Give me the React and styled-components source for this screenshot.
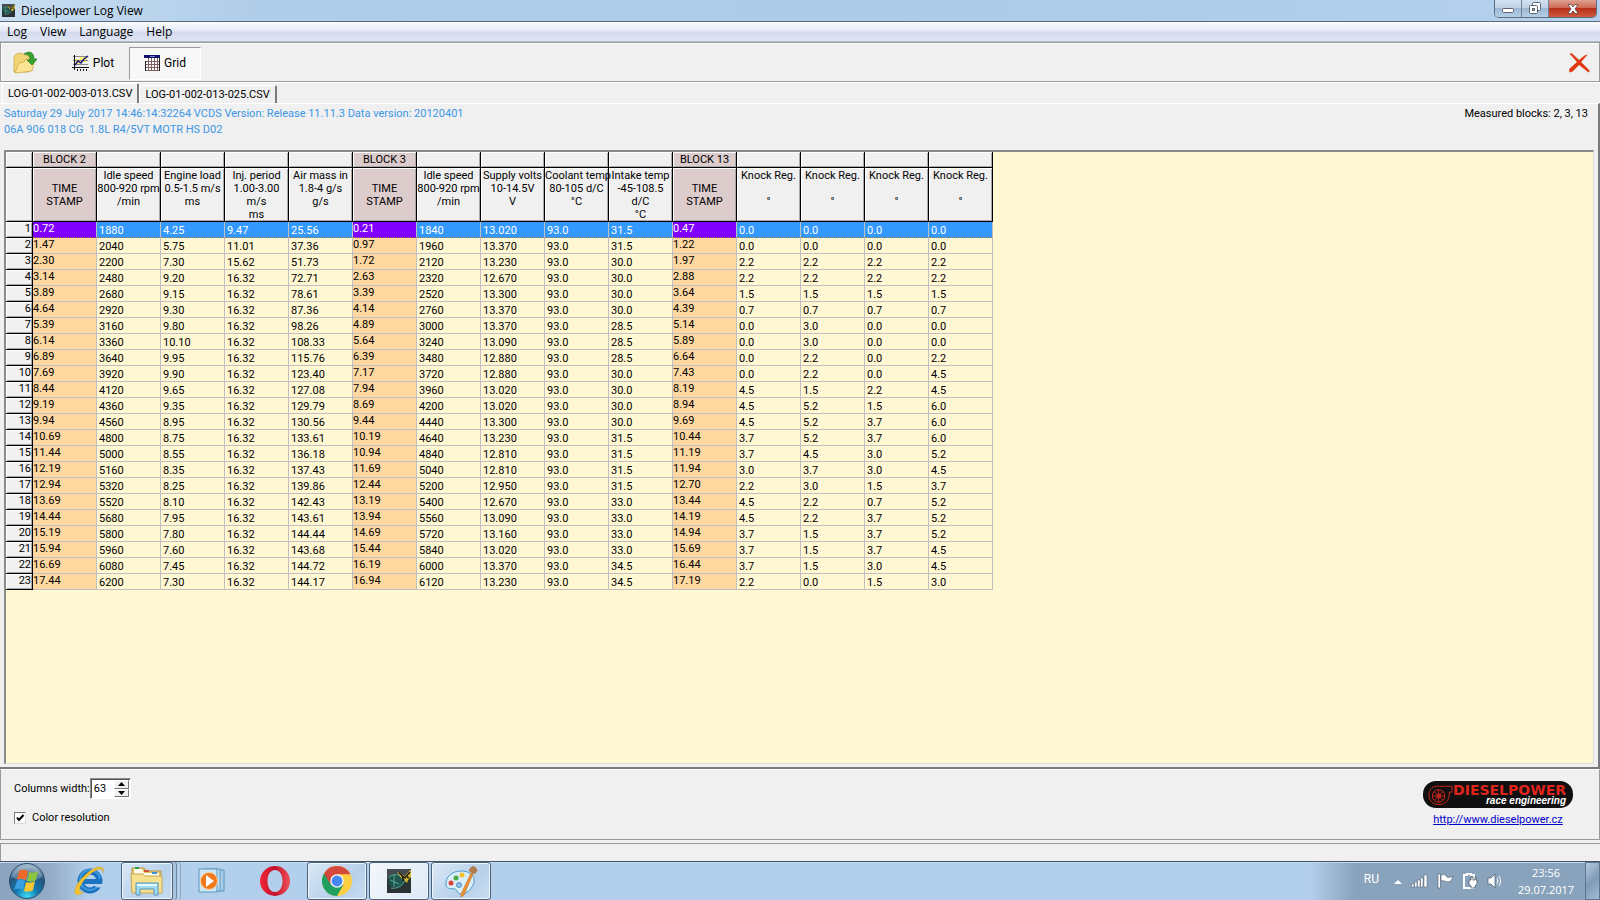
import React, { useState } from "react"
import styled, { createGlobalStyle, css } from "styled-components"

const GlobalStyle = createGlobalStyle`
  * {
    box-sizing: border-box;
  }
  body {
    margin: 0;
    background: #f0f0f0;
  }
  button,
  input {
    font: inherit;
    color: inherit;
    padding: 0;
    margin: 0;
  }
`

const Window = styled.div`
  display: flex;
  flex-direction: column;
  min-height: 100vh;
  background: #f0f0f0;
  color: #000;
  font: 11px/16px Roboto, "Liberation Sans", Arial, sans-serif;
`

const TitleBar = styled.header`
  display: flex;
  align-items: center;
  gap: 6px;
  height: 22px;
  padding-left: 2px;
  background: linear-gradient(90deg, #c9dff2, #b0cde9 16%, #acccea 60%, #b4d0ec);
  border-bottom: 1px solid #5b6b7c;
  font: 12px/18px "Open Sans", "Noto Sans", sans-serif;
`

const Title = styled.h1`
  flex: 1;
  margin: 0;
  font-size: 12px;
  font-weight: 400;
`

const WindowButtons = styled.div`
  display: flex;
  align-self: flex-start;
  height: 18px;
  margin-right: 3px;
  border: 1px solid #5a6d82;
  border-top: 0;
  border-radius: 0 0 5px 5px;
  overflow: hidden;
`

const WindowButton = styled.button`
  display: flex;
  align-items: center;
  justify-content: center;
  width: ${(props) => (props.$close ? 47 : 27)}px;
  border: 0;
  border-right: ${(props) => (props.$close ? "0" : "1px solid #6d8298")};
  background: ${(props) =>
    props.$close
      ? "linear-gradient(#dfa292, #cf6a55 45%, #b8301a 50%, #cf5a3c)"
      : "linear-gradient(#d3e2f2, #bfd2e6 45%, #9fb9d4 50%, #b5cfe8)"};
`

const MenuBar = styled.nav`
  display: flex;
  height: 20px;
  padding-left: 7px;
  gap: 13px;
  background: linear-gradient(#fbfcfe, #e4e9f5 45%, #d4dbed 55%, #dfe4f3);
  border-bottom: 1px solid #b5bccb;
  font: 12px/20px "Open Sans", "Noto Sans", sans-serif;
`

const MenuItem = styled.button`
  border: 0;
  background: none;
`

const ToolBar = styled.div`
  display: flex;
  align-items: center;
  height: 40px;
  padding: 2px 8px 0 11px;
  border: 1px solid #9a9a9a;
  box-shadow: inset 1px 1px #fff, 0 1px #fff;
  font-size: 12px;
`

const ToolGroup = styled.div`
  display: flex;
  flex: 1;
  margin-left: 18px;
`

const ToolButton = styled.button`
  display: flex;
  align-items: center;
  justify-content: center;
  gap: 4px;
  width: ${(props) => props.$width}px;
  height: 33px;
  border: 1px solid transparent;
  background: none;
  ${(props) =>
    props.$pressed &&
    css`
      border-color: #9a9a9a #fff #fff #9a9a9a;
      background: #f8f8f8;
    `}
`

const Spacer = styled.div`
  flex: 1;
`

const Tabs = styled.div`
  display: flex;
  align-items: flex-end;
  height: 21px;
  padding-left: 2px;
`

const Tab = styled.button`
  height: ${(props) => (props.$active ? 20 : 18)}px;
  padding: 0 5px;
  border: 0;
  border-top: 1px solid #fff;
  border-left: 1px solid #fff;
  border-right: 2px solid #7a7a7a;
  border-radius: 2px 2px 0 0;
  background: #f0f0f0;
`

const Page = styled.main`
  flex: 1;
  display: flex;
  flex-direction: column;
  padding: 2px 4px 3px;
  border-top: 1px solid #fff;
  border-right: 2px solid #7a7a7a;
  border-bottom: 2px solid #7a7a7a;
`

const Info = styled.div`
  display: flex;
  justify-content: space-between;
  padding: 0 6px 0 0;
  height: 44px;
`

const LogInfo = styled.div`
  color: #3c96e6;
  white-space: pre;
`

const GridBox = styled.div`
  flex: 1;
  border: 2px solid #8a8a8a;
  border-right: 1px solid #dcdcdc;
  border-bottom: 1px solid #dcdcdc;
  background: #fff8d2;
`

const Table = styled.table`
  width: 987px;
  table-layout: fixed;
  border-collapse: separate;
  border-spacing: 0;
`

const HeadCell = styled.th`
  height: ${(props) => props.$height}px;
  padding: ${(props) => (props.$center ? "0" : "1px 0 0")};
  border-right: 1px solid #000;
  border-bottom: 1px solid #000;
  background: ${(props) => (props.$stamp ? "#dccccc" : "#f0f0f0")};
  box-shadow: inset 1px 1px #fff, inset -1px -1px #a8a8a8;
  font-weight: 400;
  line-height: ${(props) => (props.$center ? 13 : 12)}px;
  line-height: 13px;
  text-align: center;
  vertical-align: ${(props) => (props.$center ? "middle" : "top")};
  white-space: pre;
`

const RowNumber = styled.th`
  height: 16px;
  padding: 0 1px 0 0;
  border-right: 1px solid #000;
  border-bottom: 1px solid #000;
  background: #f0f0f0;
  box-shadow: inset 1px 1px #fff, inset -1px -1px #a8a8a8;
  font-weight: 400;
  line-height: 13px;
  text-align: right;
  vertical-align: top;
`

const Cell = styled.td`
  height: 16px;
  padding: ${(props) => (props.$stamp ? "0" : "2px 0 0 2px")};
  border-right: 1px solid #c0c0c0;
  border-bottom: 1px solid #c0c0c0;
  background: ${(props) => (props.$stamp ? "#ffd8a0" : "#fff8d2")};
  line-height: 13px;
  vertical-align: top;
  ${(props) =>
    props.$selected &&
    css`
      color: #fff;
      background: ${props.$stamp ? "#8000ff" : "#3399ff"};
      border-bottom: 1px dotted #b07a50;
    `}
`

const Options = styled.section`
  display: flex;
  justify-content: space-between;
  height: 71px;
  padding: 8px 26px 0 13px;
  border: 1px solid #9a9a9a;
  border-top-color: #fff;
`

const Controls = styled.div`
  display: flex;
  flex-direction: column;
  gap: 11px;
`

const Field = styled.label`
  display: flex;
  align-items: center;
  height: 21px;
`

const SpinBox = styled.span`
  display: flex;
  width: 41px;
  height: 21px;
  padding: 1px;
  border: 1px solid;
  border-color: #8a8a8a #fff #fff #8a8a8a;
  background: #fff;
  box-shadow: inset 1px 1px #555;
`

const SpinInput = styled.input`
  flex: 1;
  min-width: 0;
  padding-left: 2px;
  border: 0;
  outline: 0;
  background: none;
`

const SpinButtons = styled.span`
  display: flex;
  flex-direction: column;
  width: 15px;
`

const SpinButton = styled.button`
  display: flex;
  flex: 1;
  align-items: center;
  justify-content: center;
  border: 1px solid;
  border-color: #fff #777 #777 #fff;
  background: #f0f0f0;
`

const CheckField = styled.label`
  display: flex;
  align-items: center;
  gap: 6px;
`

const CheckBox = styled.input`
  appearance: none;
  width: 12px;
  height: 12px;
  border: 1px solid;
  border-color: #777 #ddd #ddd #777;
  background: #fff;
  &:checked {
    background: #fff
      url("data:image/svg+xml,%3Csvg xmlns='http://www.w3.org/2000/svg' viewBox='0 0 10 10'%3E%3Cpath d='M2 4.5l2 2.5 4.500-5' fill='none' stroke='%23000' stroke-width='2'/%3E%3C/svg%3E");
  }
`

const Brand = styled.div`
  display: flex;
  flex-direction: column;
  align-items: center;
  gap: 4px;
  padding-top: 3px;
`

const Logo = styled.div`
  display: flex;
  align-items: center;
  width: 150px;
  height: 27px;
  padding: 0 7px 0 5px;
  border-radius: 13px;
  background: #101010;
`

const LogoText = styled.div`
  display: flex;
  flex: 1;
  flex-direction: column;
  align-items: flex-end;
  color: #fff;
  font: italic bold 10px/10px "Liberation Sans", sans-serif;
`

const LogoName = styled.strong`
  color: #e0241c;
  font: bold 14px/12px "DejaVu Sans", sans-serif;
`

const Link = styled.a`
  color: #0000c8;
`

const StatusBar = styled.footer`
  height: 18px;
  margin-top: 3px;
  border: 1px solid #9a9a9a;
  border-width: 1px 0 0 1px;
`

const TaskBar = styled.div`
  display: flex;
  gap: 2px;
  height: 39px;
  border-top: 1px solid #44566a;
  background: linear-gradient(
    90deg,
    #8ba3bd 0,
    #94acc6 50px,
    #b2cfec 90px,
    #b2cfec calc(100% - 290px),
    #8aa3bc calc(100% - 245px)
  );
  box-shadow: inset 0 1px #c4d9ee;
`

const Task = styled.button`
  display: flex;
  align-items: center;
  justify-content: center;
  width: ${(props) => (props.$start ? 57 : 60)}px;
  padding-right: ${(props) => (props.$start ? 3 : 0)}px;
  border: 1px solid transparent;
  border-radius: 3px;
  background: none;
  ${(props) =>
    props.$open &&
    css`
      border-color: #4c627a;
      background: ${props.$active
        ? "linear-gradient(135deg, #f4f8fc, #dce9f5)"
        : "linear-gradient(135deg, #dbe8f5, #b7d1eb 60%, #c8dcf0)"};
      box-shadow: inset 0 0 0 1px #eef5fc;
    `}
  ${(props) =>
    props.$stacked &&
    css`
      width: 52px;
      margin-right: 8px;
      box-shadow: inset 0 0 0 1px #eef5fc, 3px 0 #a9c4df, 4px 0 #6c859f,
        7px 0 #b2cfec, 8px 0 #8ea9c4;
    `}
`

const Tray = styled.div`
  display: flex;
  align-items: center;
  color: #fff;
`

const InputLanguage = styled.span`
  padding-bottom: 4px;
  font-size: 12px;
`

const TrayIcons = styled.div`
  display: flex;
  align-items: center;
  gap: 9px;
  margin: 0 15px;
`

const Clock = styled.time`
  width: 56px;
  margin-right: 11px;
  font: 11px/17px "Open Sans", "Noto Sans", sans-serif;
  text-align: center;
  white-space: nowrap;
`

const ShowDesktop = styled.button`
  align-self: stretch;
  width: 15px;
  border: 1px solid #5b7591;
  background: linear-gradient(135deg, #b8cbdf, #7f9bb8 50%, #a4bcd4);
`

const AppIcon = ({ size }) => (
  <svg width={size} height={size} viewBox="0 0 24 24">
    <rect width="24" height="24" fill="#2b3234" />
    <path d="M0 0h24v5L0 10z" fill="#454b4e" />
    <path d="M1 8c6-5 12-3 16 1v6c-4 5-12 4-15 1z" fill="#20544f" />
    <path d="M2 8c5-4 12-3 16 4M4 19c5 1 11-1 14-8M3 11l9 4M7 6v12" stroke="#5aa596" fill="none" />
    <path d="M10 3l8 4 5-6 1 1v6l-3 3-1 3-3-3-3-2z" fill="#d9b933" />
    <path d="M12 4l6 5 5-6M15 7l2 5M20 8l2 1" stroke="#1d1d10" strokeWidth="1.500" fill="none" />
  </svg>
)

const OpenIcon = () => (
  <svg width="25" height="24" viewBox="0 0 25 24">
    <path d="M1 21V6l2-3 6-1 2 2 8 0v6l-3 11z" fill="#f2d676" stroke="#c9a444" strokeWidth=".7" />
    <path d="M2 22l4-10 5-1 2-3 9 1-3 11z" fill="#fbe593" stroke="#d0ac4e" strokeWidth=".8" />
    <path d="M11 3c6-4 10-1 10 5h3l-5 6-5-5h3c0-4-2-6-6-6z" fill="#37a62f" stroke="#18731c" strokeWidth=".7" />
  </svg>
)

const PlotIcon = () => (
  <svg width="17" height="16" viewBox="0 0 17 16" fill="none">
    <path d="M2 4h6v5H2zM8 1h7v6H8z" fill="#fff27a" />
    <path d="M1 1.500h15M1 5.500h15M1 9.500h15" stroke="#8a8a8a" />
    <path d="M2.500 0v15M0 12.500h17M5.500 14v2M8.500 14v2M11.500 14v2M14.500 14v2" stroke="#111" />
    <path d="M3 10l3-4 3 2 3-4 4-3" stroke="#16167c" strokeWidth="1.500" />
  </svg>
)

const GridIcon = () => (
  <svg width="16" height="16" viewBox="0 0 16 16">
    <path d="M1 3h14v13H1z" fill="#fff" />
    <path d="M4.500 3v13M7.500 3v13M10.500 3v13M13.500 3v13M1 6.500h15M1 9.500h15M1 12.500h15M1 15.500h15" stroke="#806060" />
    <path d="M0 0h16v3H0z" fill="#10106e" />
    <path d="M15.500 3v13M1.500 6v10" stroke="#222" />
    <path d="M6 1.500h5" stroke="#6a80d0" />
  </svg>
)

const CloseLogIcon = () => (
  <svg width="23" height="22" viewBox="0 0 23 22">
    <path d="M1 1l2-.5L11 8l6-5 3-1-7 8 9 9v2l-2-1-9-7-7 7-3 1-1-3 9-8z" fill="#df3510" stroke="#df3510" strokeWidth=".5" />
  </svg>
)

const MinimizeIcon = () => (
  <svg width="12" height="16" viewBox="0 0 12 16">
    <rect x=".5" y="7.500" width="11" height="4" rx="1" fill="#fff" stroke="#5b6470" />
  </svg>
)

const RestoreIcon = () => (
  <svg width="12" height="13" viewBox="0 0 12 13">
    <rect x="3.500" y=".5" width="8" height="8" rx="1" fill="#fff" stroke="#5b6470" />
    <rect x=".5" y="3.500" width="8" height="8" rx="1" fill="#fff" stroke="#5b6470" />
    <rect x="3.500" y="6.500" width="2" height="2" fill="#9fb9d4" stroke="#5b6470" />
  </svg>
)

const CrossIcon = () => (
  <svg width="12" height="12" viewBox="0 0 12 12">
    <path d="M1 1.500h3L6 4l2-2.500h3L8 6l3.300 4.500H8L6 8l-2 2.500H.7L4 6z" fill="#fff" stroke="#5a3c42" strokeWidth=".8" />
  </svg>
)

const TurboIcon = () => (
  <svg width="26" height="22" viewBox="0 0 26 22" fill="none" stroke="#d0241c">
    <path d="M25 2v6h-3c1 8-4 13-11 13C5 21 1 17 1 11S5 1 12 2z" />
    <circle cx="11" cy="12" r="6.500" />
    <circle cx="11" cy="12" r="2" />
    <path d="M11 5.500v13M4.500 12h13M6.500 7.500l9 9M15.500 7.500l-9 9" />
  </svg>
)

const StartIcon = () => (
  <svg width="38" height="38" viewBox="0 0 38 38">
    <defs>
      <radialGradient id="orb" cx=".5" cy=".95" r=".95">
        <stop offset="0" stopColor="#3fdcf5" />
        <stop offset=".35" stopColor="#1378b0" />
        <stop offset=".7" stopColor="#27557d" />
        <stop offset="1" stopColor="#a9c4d8" />
      </radialGradient>
    </defs>
    <circle cx="19" cy="19" r="17.500" fill="url(#orb)" stroke="#294c6c" />
    <path d="M4 15C8 0 30 0 34 15c-9 5-21 5-30 0z" fill="#fff" opacity=".25" />
    <path d="M11 9c3-2 6-1 9 0l-2 9c-3-1-6-2-9 0z" fill="#ef6a28" />
    <path d="M21 10c3 1 6 1 9-1l-2 9c-3 2-6 2-9 1z" fill="#8cc63e" />
    <path d="M9 19c3-2 5-1 8 0l-2 9c-3-1-6-2-9 0z" fill="#38a0e2" />
    <path d="M18 20c3 1 6 1 9-1l-2 9c-3 2-6 2-9 1z" fill="#fcc832" />
  </svg>
)

const ExplorerIcon = () => (
  <svg width="32" height="32" viewBox="0 0 32 32">
    <circle cx="17" cy="16" r="9.500" fill="none" stroke="#1a70c0" strokeWidth="6" />
    <circle cx="17" cy="15" r="10" fill="none" stroke="#53b4ec" strokeWidth="2" opacity=".6" />
    <path d="M10 14h19v5H10z" fill="#1c73c2" />
    <path d="M20 19h10v4l-7-1z" fill="#b2cfec" />
    <path d="M30 8c1-4 0-6-3-6C18 2 4 16 2 25c-1 6 3 6 9 2-4 1-5-1-4-5C10 14 22 4 27 4c2 0 3 1 3 4z" fill="#f2c230" stroke="#c99b22" strokeWidth=".4" />
  </svg>
)

const FolderIcon = () => (
  <svg width="34" height="32" viewBox="0 0 34 32">
    <path d="M2 5V3h12l2 3h15v21H2z" fill="#e2c268" stroke="#b7974a" />
    <path d="M4 4h8l2 4h15v4H4z" fill="#fffbe8" />
    <path d="M5 2h4v2H5z" fill="#24a345" />
    <path d="M14 5h5v2h-5z" fill="#d64f3a" />
    <path d="M22 7h5v2h-5z" fill="#3c91d4" />
    <path d="M1 9h12l2 2h17v17H2z" fill="#f7e08e" stroke="#c8a850" />
    <path d="M6 18h22v12h-4v-6H10v6H6z" fill="#a2dcf2" stroke="#5096bd" />
    <path d="M7 20h20" stroke="#e6faff" strokeWidth="2" />
  </svg>
)

const PlayerIcon = () => (
  <svg width="30" height="28" viewBox="0 0 30 28">
    <path d="M10 3h16v21H10z" fill="#a8cfe9" stroke="#5b94bd" />
    <path d="M6 2h16v22H6z" fill="#bfe0f3" stroke="#5b94bd" />
    <path d="M1 2h18v23H1z" fill="#cfe7f5" stroke="#5b94bd" />
    <circle cx="11" cy="14" r="8.500" fill="#f07818" stroke="#fbd0a0" />
    <path d="M8 8l8 6-8 6z" fill="#fff" />
  </svg>
)

const OperaIcon = () => (
  <svg width="30" height="32" viewBox="0 0 30 32">
    <defs>
      <linearGradient id="opera" x2="1">
        <stop stopColor="#f32738" />
        <stop offset=".5" stopColor="#c3122a" />
        <stop offset="1" stopColor="#f0525c" />
      </linearGradient>
    </defs>
    <path fillRule="evenodd" d="M15 1a15 15 0 100 30 15 15 0 000-30zm0 4c5 0 7.500 5 7.500 11S20 27 15 27 7.500 22 7.500 16 10 5 15 5z" fill="url(#opera)" />
  </svg>
)

const ChromeIcon = () => (
  <svg width="30" height="30" viewBox="0 0 30 30">
    <circle cx="15" cy="15" r="15" fill="#ffcd41" />
    <path d="M15 15L2 7.500A15 15 0 0015 30l6.500-11.200z" fill="#1fa05e" />
    <path d="M15 8.200h13.300A15 15 0 002 7.500l6.800 11z" fill="#d5493c" />
    <circle cx="15" cy="15" r="6.800" fill="#f5f5f5" />
    <circle cx="15" cy="15" r="5.400" fill="#4687f4" />
  </svg>
)

const PaintIcon = () => (
  <svg width="34" height="32" viewBox="0 0 34 32">
    <path d="M2 20C1 12 8 6 17 6c8 0 14 4 13 11-1 6-7 12-13 12-4 0-3-4-6-5-4-1-8 1-9-4z" fill="#d9eef9" stroke="#4e9bc5" />
    <circle cx="7" cy="18" r="2.500" fill="#d9453a" />
    <circle cx="12" cy="13" r="2.500" fill="#49ab45" />
    <circle cx="18" cy="10" r="2.500" fill="#f5c22a" />
    <circle cx="15" cy="20" r="2.500" fill="#8cc4e8" stroke="#4e8fc0" />
    <path d="M27 8l2 1-9 21-3 2v-3z" fill="#ee9136" stroke="#b96918" strokeWidth=".5" />
    <path d="M25 6c0-3 3-5 5-5l3 3c1 2-1 5-4 5z" fill="#b07b4a" />
  </svg>
)

const SignalIcon = () => (
  <svg width="17" height="14" viewBox="0 0 17 14" fill="#fff" stroke="#46586b" strokeWidth=".5">
    <path d="M.5 10h2.500v3H.5zM3.500 8H6v5H3.500zM6.500 6H9v7H6.500zM9.500 4H12v9H9.500zM13 1h3v12h-3z" />
  </svg>
)

const FlagIcon = () => (
  <svg width="17" height="16" viewBox="0 0 17 16" fill="#fff" stroke="#46586b" strokeWidth=".6">
    <path d="M1 1h2.500v14H1z" />
    <path d="M4 2c3-1 5 0 6 2 2 1 4 0 6-1-1 3-2 6-5 6-2 0-4-2-7-1z" />
  </svg>
)

const PowerIcon = () => (
  <svg width="15" height="16" viewBox="0 0 15 16">
    <path d="M4 2V.8h4V2h3v13H1V2z" fill="none" stroke="#fff" strokeWidth="2" />
    <path d="M8 4v3H6v4l2 2v2h4v-2l2-2V7h-1V4h-1v3h-2V4z" fill="#fff" stroke="#46586b" strokeWidth=".8" />
  </svg>
)

const SoundIcon = () => (
  <svg width="16" height="16" viewBox="0 0 16 16" fill="none" stroke="#fff">
    <path d="M1 5h3l4-4v14l-4-4H1z" fill="#fff" stroke="#46586b" strokeWidth=".7" />
    <path d="M10 5c1 2 1 4 0 6M12 3c2 3 2 7 0 10" />
  </svg>
)

const Arrow = ({ up }) => (
  <svg width="7" height="4" viewBox="0 0 7 4">
    <path d={up ? "M0 4l3.500-4L7 4z" : "M0 0l3.500 4L7 0z"} />
  </svg>
)

const stamp = "TIME\nSTAMP"

const columns = [
  { block: "BLOCK 2", label: stamp },
  { label: "Idle speed\n800-920 rpm\n/min" },
  { label: "Engine load\n0.5-1.5 m/s\nms" },
  { label: "Inj. period\n1.00-3.00\nm/s\nms" },
  { label: "Air mass in\n1.8-4 g/s\ng/s" },
  { block: "BLOCK 3", label: stamp },
  { label: "Idle speed\n800-920 rpm\n/min" },
  { label: "Supply volts\n10-14.5V\nV" },
  { label: "Coolant temp\n80-105 d/C\n°C" },
  { label: "Intake temp\n-45-108.5\nd/C\n°C" },
  { block: "BLOCK 13", label: stamp },
  { label: "Knock Reg.\n\n°" },
  { label: "Knock Reg.\n\n°" },
  { label: "Knock Reg.\n\n°" },
  { label: "Knock Reg.\n\n°" },
]

const rows = `0.72 1880 4.25 9.47 25.56 0.21 1840 13.020 93.0 31.5 0.47 0.0 0.0 0.0 0.0
1.47 2040 5.75 11.01 37.36 0.97 1960 13.370 93.0 31.5 1.22 0.0 0.0 0.0 0.0
2.30 2200 7.30 15.62 51.73 1.72 2120 13.230 93.0 30.0 1.97 2.2 2.2 2.2 2.2
3.14 2480 9.20 16.32 72.71 2.63 2320 12.670 93.0 30.0 2.88 2.2 2.2 2.2 2.2
3.89 2680 9.15 16.32 78.61 3.39 2520 13.300 93.0 30.0 3.64 1.5 1.5 1.5 1.5
4.64 2920 9.30 16.32 87.36 4.14 2760 13.370 93.0 30.0 4.39 0.7 0.7 0.7 0.7
5.39 3160 9.80 16.32 98.26 4.89 3000 13.370 93.0 28.5 5.14 0.0 3.0 0.0 0.0
6.14 3360 10.10 16.32 108.33 5.64 3240 13.090 93.0 28.5 5.89 0.0 3.0 0.0 0.0
6.89 3640 9.95 16.32 115.76 6.39 3480 12.880 93.0 28.5 6.64 0.0 2.2 0.0 2.2
7.69 3920 9.90 16.32 123.40 7.17 3720 12.880 93.0 30.0 7.43 0.0 2.2 0.0 4.5
8.44 4120 9.65 16.32 127.08 7.94 3960 13.020 93.0 30.0 8.19 4.5 1.5 2.2 4.5
9.19 4360 9.35 16.32 129.79 8.69 4200 13.020 93.0 30.0 8.94 4.5 5.2 1.5 6.0
9.94 4560 8.95 16.32 130.56 9.44 4440 13.300 93.0 30.0 9.69 4.5 5.2 3.7 6.0
10.69 4800 8.75 16.32 133.61 10.19 4640 13.230 93.0 31.5 10.44 3.7 5.2 3.7 6.0
11.44 5000 8.55 16.32 136.18 10.94 4840 12.810 93.0 31.5 11.19 3.7 4.5 3.0 5.2
12.19 5160 8.35 16.32 137.43 11.69 5040 12.810 93.0 31.5 11.94 3.0 3.7 3.0 4.5
12.94 5320 8.25 16.32 139.86 12.44 5200 12.950 93.0 31.5 12.70 2.2 3.0 1.5 3.7
13.69 5520 8.10 16.32 142.43 13.19 5400 12.670 93.0 33.0 13.44 4.5 2.2 0.7 5.2
14.44 5680 7.95 16.32 143.61 13.94 5560 13.090 93.0 33.0 14.19 4.5 2.2 3.7 5.2
15.19 5800 7.80 16.32 144.44 14.69 5720 13.160 93.0 33.0 14.94 3.7 1.5 3.7 5.2
15.94 5960 7.60 16.32 143.68 15.44 5840 13.020 93.0 33.0 15.69 3.7 1.5 3.7 4.5
16.69 6080 7.45 16.32 144.72 16.19 6000 13.370 93.0 34.5 16.44 3.7 1.5 3.0 4.5
17.44 6200 7.30 16.32 144.17 16.94 6120 13.230 93.0 34.5 17.19 2.2 0.0 1.5 3.0`
  .split("\n")
  .map((line) => line.split(" "))

const LogGrid = ({ selected, onSelect }) => {
  return (
    <Table>
      <colgroup>
        <col width="27" />
        {columns.map((column, i) => (
          <col key={i} width="64" />
        ))}
      </colgroup>
      <thead>
        <tr>
          <HeadCell $height={16} />
          {columns.map((column, i) => (
            <HeadCell key={i} $height={16} $stamp={column.block} $center>
              {column.block}
            </HeadCell>
          ))}
        </tr>
        <tr>
          <HeadCell $height={52} />
          {columns.map((column, i) => (
            <HeadCell
              key={i}
              $height={52}
              $stamp={column.block}
              $center={column.block}
            >
              {column.label}
            </HeadCell>
          ))}
        </tr>
      </thead>
      <tbody>
        {rows.map((row, r) => (
          <tr key={r} onClick={() => onSelect(r)}>
            <RowNumber>{r + 1}</RowNumber>
            {row.map((value, i) => (
              <Cell key={i} $stamp={columns[i].block} $selected={r === selected}>
                {value}
              </Cell>
            ))}
          </tr>
        ))}
      </tbody>
    </Table>
  )
}

const App = () => {
  const [selected, setSelected] = useState(0)
  const [width, setWidth] = useState(63)

  return (
    <>
      <GlobalStyle />
      <Window>
        <TitleBar>
          <AppIcon size={13} />
          <Title>Dieselpower Log View</Title>
          <WindowButtons>
            <WindowButton aria-label="Minimize">
              <MinimizeIcon />
            </WindowButton>
            <WindowButton aria-label="Restore">
              <RestoreIcon />
            </WindowButton>
            <WindowButton aria-label="Close" $close>
              <CrossIcon />
            </WindowButton>
          </WindowButtons>
        </TitleBar>
        <MenuBar>
          <MenuItem>Log</MenuItem>
          <MenuItem>View</MenuItem>
          <MenuItem>Language</MenuItem>
          <MenuItem>Help</MenuItem>
        </MenuBar>
        <ToolBar>
          <ToolButton $width={27} aria-label="Open log">
            <OpenIcon />
          </ToolButton>
          <ToolGroup>
            <ToolButton $width={72}>
              <PlotIcon />
              Plot
            </ToolButton>
            <ToolButton $width={72} $pressed>
              <GridIcon />
              Grid
            </ToolButton>
          </ToolGroup>
          <ToolButton $width={23} aria-label="Close log">
            <CloseLogIcon />
          </ToolButton>
        </ToolBar>
        <Tabs>
          <Tab $active>LOG-01-002-003-013.CSV</Tab>
          <Tab>LOG-01-002-013-025.CSV</Tab>
        </Tabs>
        <Page>
          <Info>
            <LogInfo>
              {"Saturday 29 July 2017 14:46:14:32264 VCDS Version: Release 11.11.3 Data version: 20120401\n06A 906 018 CG  1.8L R4/5VT MOTR HS D02"}
            </LogInfo>
            <span>Measured blocks: 2, 3, 13</span>
          </Info>
          <GridBox>
            <LogGrid selected={selected} onSelect={setSelected} />
          </GridBox>
        </Page>
        <Options>
          <Controls>
            <Field htmlFor="width">
              Columns width:
              <SpinBox>
                <SpinInput
                  id="width"
                  value={width}
                  onChange={(e) => setWidth(Number(e.target.value) || 0)}
                />
                <SpinButtons>
                  <SpinButton aria-label="Wider" onClick={() => setWidth(width + 1)}>
                    <Arrow up />
                  </SpinButton>
                  <SpinButton aria-label="Narrower" onClick={() => setWidth(width - 1)}>
                    <Arrow />
                  </SpinButton>
                </SpinButtons>
              </SpinBox>
            </Field>
            <CheckField>
              <CheckBox type="checkbox" defaultChecked />
              Color resolution
            </CheckField>
          </Controls>
          <Brand>
            <Logo>
              <TurboIcon />
              <LogoText>
                <LogoName>DIESELPOWER</LogoName>
                race engineering
              </LogoText>
            </Logo>
            <Link href="http://www.dieselpower.cz">http://www.dieselpower.cz</Link>
          </Brand>
        </Options>
        <StatusBar />
        <TaskBar>
          <Task $start aria-label="Start">
            <StartIcon />
          </Task>
          <Task aria-label="Internet Explorer">
            <ExplorerIcon />
          </Task>
          <Task $open $stacked aria-label="Explorer">
            <FolderIcon />
          </Task>
          <Task aria-label="Media Player">
            <PlayerIcon />
          </Task>
          <Task aria-label="Opera">
            <OperaIcon />
          </Task>
          <Task $open aria-label="Chrome">
            <ChromeIcon />
          </Task>
          <Task $open $active aria-label="Dieselpower Log View">
            <AppIcon size={24} />
          </Task>
          <Task $open aria-label="Paint">
            <PaintIcon />
          </Task>
          <Spacer />
          <Tray>
            <InputLanguage>RU</InputLanguage>
            <TrayIcons>
              <svg width="8" height="5" viewBox="0 0 8 5">
                <path d="M0 5l4-4 4 4z" fill="#fff" />
              </svg>
              <SignalIcon />
              <FlagIcon />
              <PowerIcon />
              <SoundIcon />
            </TrayIcons>
            <Clock>
              23:56
              <br />
              29.07.2017
            </Clock>
            <ShowDesktop aria-label="Show desktop" />
          </Tray>
        </TaskBar>
      </Window>
    </>
  )
}

export default App
